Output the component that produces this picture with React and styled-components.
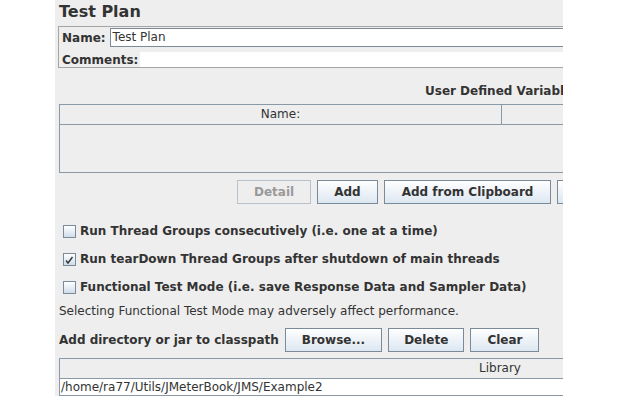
import React from "react";
import styled, { createGlobalStyle } from "styled-components";

const GlobalStyle = createGlobalStyle`
  html, body { margin: 0; padding: 0; background: #ffffff; }
  body { font-family: "DejaVu Sans", "Liberation Sans", sans-serif; }
`;

const Page = styled.div`
  display: flex;
  height: 396px;
  width: 618px;
  overflow: hidden;
`;

const Gutter = styled.div`
  width: 55px;
  flex: none;
`;

const Panel = styled.div`
  width: 508px;
  flex: none;
  background: #eeeeee;
  overflow: hidden;
  color: #333333;
`;

const Content = styled.div`
  width: 900px;
  display: flex;
  flex-direction: column;
  padding-left: 3px;
  box-sizing: border-box;
`;

const Title = styled.div`
  font-size: 16px;
  font-weight: bold;
  line-height: 21px;
  height: 26px;
  padding: 1px 0 0 1px;
  box-sizing: border-box;
`;

const FieldBox = styled.div`
  border: 1px solid #a4a4a4;
  padding: 1px 0 0 2px;
  height: 42px;
  box-sizing: border-box;
  display: flex;
  flex-direction: column;
  gap: 5px;
`;

const FieldRow = styled.div`
  display: flex;
  align-items: center;
  height: ${(p) => p.$h}px;
`;

const Label = styled.span`
  font-size: 12px;
  font-weight: bold;
  padding-left: 1px;
  margin-right: ${(p) => p.$gap}px;
  white-space: nowrap;
`;

const TextField = styled.div`
  flex: 1;
  height: 19px;
  box-sizing: border-box;
  background: #ffffff;
  border: 1px solid #7a8a99;
  font-size: 12px;
  line-height: 17px;
  padding-left: 2px;
`;

const TextArea = styled.div`
  flex: 1;
  height: 15px;
  background: #ffffff;
`;

const SectionHeading = styled.div`
  margin-top: 16px;
  height: 14px;
  line-height: 14px;
  font-size: 12px;
  font-weight: bold;
  padding-left: 367px;
  white-space: nowrap;
`;

const Table = styled.div`
  margin-top: 6px;
  margin-left: 1px;
  width: ${(p) => p.$w}px;
  height: ${(p) => p.$h}px;
  box-sizing: border-box;
  border: 1px solid #8a99a8;
  border-right: none;
  display: flex;
  flex-direction: column;
`;

const HeaderRow = styled.div`
  display: flex;
  height: 19px;
  border-bottom: 1px solid #8a99a8;
  flex: none;
`;

const HeaderCell = styled.div`
  width: ${(p) => p.$w}px;
  flex: none;
  text-align: center;
  font-size: 12px;
  line-height: 19px;
  border-right: ${(p) => (p.$divider ? "1px solid #8a99a8" : "none")};
  box-sizing: border-box;
`;

const DataRow = styled.div`
  height: 16px;
  background: #ffffff;
  font-size: 12px;
  line-height: 16px;
  padding-left: 1px;
  border-bottom: 1px solid #8a99a8;
  white-space: nowrap;
`;

const ButtonRow = styled.div`
  display: flex;
  gap: 6px;
  margin-top: 7px;
  padding-left: ${(p) => p.$indent}px;
  align-items: center;
`;

const Button = styled.div`
  height: 24px;
  box-sizing: border-box;
  padding: 0 ${(p) => p.$pad || 16}px;
  border: 1px solid ${(p) => (p.$disabled ? "#b8c2cc" : "#7a8a99")};
  background: ${(p) =>
    p.$disabled
      ? "#eeeeee"
      : "linear-gradient(to bottom, #ffffff 0%, #f2f6fa 35%, #dde7f1 100%)"};
  color: ${(p) => (p.$disabled ? "#999999" : "#333333")};
  font-size: 12px;
  font-weight: bold;
  line-height: 22px;
  white-space: nowrap;
  flex: none;
`;

const CheckRow = styled.div`
  display: flex;
  align-items: center;
  height: 28px;
  padding-left: 5px;
  gap: 4px;
  margin-top: ${(p) => p.$mt || 0}px;
`;

const Box = styled.div`
  width: 13px;
  height: 13px;
  box-sizing: border-box;
  border: 1px solid #7a8a99;
  background: linear-gradient(to bottom, #ffffff 0%, #e6eef6 50%, #cfdde9 100%);
  display: flex;
  align-items: center;
  justify-content: center;
  flex: none;
`;

const CheckText = styled.span`
  font-size: 12px;
  font-weight: bold;
  white-space: nowrap;
`;

const Note = styled.div`
  margin-top: 3px;
  padding-left: 1px;
  font-size: 12px;
  line-height: 14px;
  white-space: nowrap;
`;

const ClasspathRow = styled.div`
  display: flex;
  align-items: center;
  gap: 6px;
  margin-top: 10px;
`;

const ClasspathLabel = styled.span`
  font-size: 12px;
  font-weight: bold;
  padding-left: 1px;
  white-space: nowrap;
`;

const Checkbox = ({ checked, children, mt }) => (
  <CheckRow $mt={mt}>
    <Box>
      {checked && (
        <svg width="11" height="11" viewBox="0 0 11 11">
          <path d="M2 6.5 L4 9 L8.5 3" fill="none" stroke="#333" strokeWidth="1.4" />
        </svg>
      )}
    </Box>
    <CheckText>{children}</CheckText>
  </CheckRow>
);

export default function App() {
  return (
    <>
      <GlobalStyle />
      <Page>
        <Gutter />
        <Panel>
          <Content>
            <Title>Test Plan</Title>
            <FieldBox>
              <FieldRow $h={19}>
                <Label $gap={4}>Name:</Label>
                <TextField>Test Plan</TextField>
              </FieldRow>
              <FieldRow $h={15}>
                <Label $gap={2}>Comments:</Label>
                <TextArea />
              </FieldRow>
            </FieldBox>
            <SectionHeading>User Defined Variables</SectionHeading>
            <Table $w={700} $h={69}>
              <HeaderRow>
                <HeaderCell $w={442} $divider>Name:</HeaderCell>
                <HeaderCell $w={200} $divider>Value</HeaderCell>
              </HeaderRow>
            </Table>
            <ButtonRow $indent={179}>
              <Button $disabled>Detail</Button>
              <Button>Add</Button>
              <Button $pad={17}>Add from Clipboard</Button>
              <Button>Delete</Button>
            </ButtonRow>
            <Checkbox mt={13}>Run Thread Groups consecutively (i.e. one at a time)</Checkbox>
            <Checkbox checked>Run tearDown Thread Groups after shutdown of main threads</Checkbox>
            <Checkbox>Functional Test Mode (i.e. save Response Data and Sampler Data)</Checkbox>
            <Note>Selecting Functional Test Mode may adversely affect performance.</Note>
            <ClasspathRow>
              <ClasspathLabel>Add directory or jar to classpath</ClasspathLabel>
              <Button>Browse...</Button>
              <Button $pad={15}>Delete</Button>
              <Button>Clear</Button>
            </ClasspathRow>
            <Table $w={880} $h={40}>
              <HeaderRow>
                <HeaderCell $w={880}>Library</HeaderCell>
              </HeaderRow>
              <DataRow>/home/ra77/Utils/JMeterBook/JMS/Example2</DataRow>
            </Table>
          </Content>
        </Panel>
      </Page>
    </>
  );
}
